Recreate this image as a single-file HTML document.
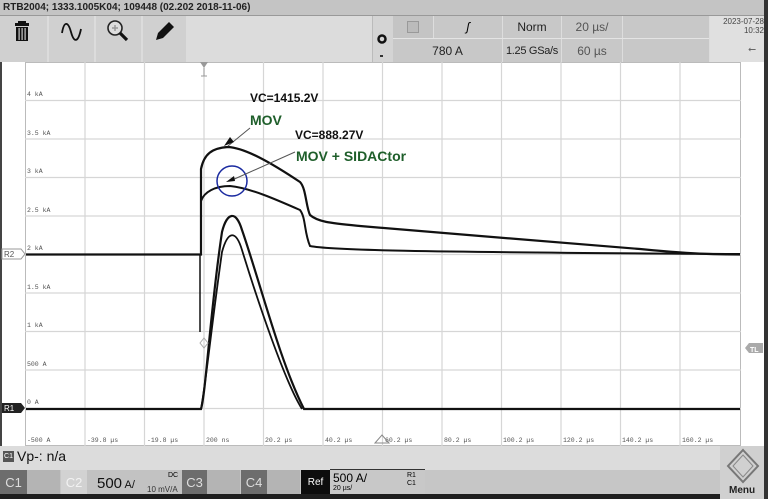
<!DOCTYPE html>
<html><head><style>
body{margin:0;width:768px;height:499px;overflow:hidden;background:#fff;font-family:"Liberation Sans",sans-serif;position:relative}
.a{position:absolute}
.tb{background:#d0d0d0}
.c{display:flex;align-items:center;justify-content:center;white-space:nowrap}
</style></head><body>
<div class="a" style="left:0;top:0;width:768px;height:15px;background:#c4c4c4;border-bottom:1px solid #999"></div>
<div class="a" style="left:3px;top:2px;font-size:10px;font-weight:bold;color:#222">RTB2004; 1333.1005K04; 109448 (02.202 2018-11-06)</div>
<div class="a" style="left:0;top:16px;width:768px;height:46px;background:#dcdcdc"></div>
<div class="a tb" style="left:0;top:16px;width:47px;height:46px"></div>
<div class="a tb" style="left:49px;top:16px;width:45px;height:46px"></div>
<div class="a tb" style="left:96px;top:16px;width:45px;height:46px"></div>
<div class="a tb" style="left:143px;top:16px;width:43px;height:46px"></div>
<svg class="a" style="left:13px;top:20px" width="22" height="24"><rect x="5" y="1" width="8" height="2" fill="#111"/><rect x="2" y="3" width="14" height="3" fill="#111"/><rect x="3" y="7" width="12" height="14" fill="#111"/><rect x="5.5" y="8" width="1.2" height="12" fill="#ccc"/><rect x="8.5" y="8" width="1.2" height="12" fill="#ccc"/><rect x="11.5" y="8" width="1.2" height="12" fill="#ccc"/></svg>
<svg class="a" style="left:60px;top:21px" width="24" height="24"><path d="M2 12 C4 0,8 0,11 11 C14 22,18 22,21 8" stroke="#111" stroke-width="1.8" fill="none"/></svg>
<svg class="a" style="left:106px;top:19px" width="24" height="24"><circle cx="9" cy="9" r="7" stroke="#222" stroke-width="1.6" fill="#ddd"/><path d="M6 9h6M9 6v6" stroke="#999" stroke-width="1.5"/><path d="M14 14l7 7" stroke="#111" stroke-width="3.2"/></svg>
<svg class="a" style="left:154px;top:20px" width="22" height="22"><path d="M2 20 L4 13 L15 2 L20 7 L9 18 Z" fill="#111"/></svg>
<div class="a" style="left:372px;top:16px;width:20px;height:46px;background:#d4d4d4;border-left:1px solid #bbb"></div>
<svg class="a" style="left:376px;top:33px" width="12" height="12"><circle cx="6" cy="6" r="3.5" stroke="#111" stroke-width="2.5" fill="none"/></svg>
<div class="a" style="left:380px;top:55px;width:3px;height:2px;background:#333"></div>
<div class="a" style="left:393px;top:16px;width:316px;height:46px;background:#c8c8c8"></div>
<div class="a" style="left:393px;top:16px;width:40px;height:22px;background:#c4c4c4;border-right:1px solid #ddd"></div>
<div class="a" style="left:407px;top:21px;width:10px;height:10px;border:1px solid #999;background:#bbb"></div>
<div class="a c" style="left:434px;top:16px;width:68px;height:22px;font-size:12px;font-style:italic;border-right:1px solid #ddd">ʃ</div>
<div class="a c" style="left:503px;top:16px;width:58px;height:22px;font-size:12px;color:#222;border-right:1px solid #ddd">Norm</div>
<div class="a c" style="left:562px;top:16px;width:60px;height:22px;font-size:12px;color:#555;border-right:1px solid #ddd">20 µs/</div>
<div class="a" style="left:393px;top:38px;width:316px;height:1px;background:#e4e4e4"></div>
<div class="a c" style="left:393px;top:39px;width:109px;height:23px;font-size:12px;color:#222;border-right:1px solid #ddd">780 A</div>
<div class="a c" style="left:503px;top:39px;width:58px;height:23px;font-size:11px;letter-spacing:-0.3px;color:#222;border-right:1px solid #ddd">1.25 GSa/s</div>
<div class="a c" style="left:562px;top:39px;width:60px;height:23px;font-size:12px;color:#555;border-right:1px solid #ddd">60 µs</div>
<div class="a" style="left:710px;top:16px;width:58px;height:46px;background:#e0e0e0"></div>
<div class="a" style="left:722px;top:17px;font-size:8px;color:#444;text-align:right;width:42px;line-height:9px">2023-07-28<br>10:32</div>
<div class="a" style="left:748px;top:44px;font-size:10px;color:#666">⭠</div>
<div class="a" style="left:764px;top:0;width:4px;height:499px;background:#333"></div>
<div class="a" style="left:0;top:62px;width:2px;height:384px;background:#444"></div>
<svg class="a" style="left:0;top:62px" width="764" height="384">
<rect x="25.5" y="0.5" width="715" height="383" fill="#fff" stroke="#bbb"/>
<g stroke="#d6d6d6" stroke-width="1.2">
<path d="M85 0v384M144.5 0v384M204 0v384M263.5 0v384M323 0v384M382.5 0v384M442 0v384M501.5 0v384M561 0v384M620.5 0v384M680 0v384"/>
<path d="M25 38.5h716M25 77h716M25 115.5h716M25 154h716M25 192.5h716M25 231h716M25 269.5h716M25 308h716M25 346.5h716"/>
</g>
<g font-size="6.5" fill="#555" font-family="Liberation Mono,monospace">
<text x="27" y="34">4 kA</text><text x="27" y="73">3.5 kA</text><text x="27" y="111">3 kA</text><text x="27" y="150">2.5 kA</text><text x="27" y="188">2 kA</text><text x="27" y="227">1.5 kA</text><text x="27" y="265">1 kA</text><text x="27" y="304">500 A</text><text x="27" y="342">0 A</text>
<text x="27" y="380">-500 A</text><text x="87" y="380">-39.8 µs</text><text x="147" y="380">-19.8 µs</text><text x="206" y="380">200 ns</text><text x="265" y="380">20.2 µs</text><text x="325" y="380">40.2 µs</text><text x="385" y="380">60.2 µs</text><text x="444" y="380">80.2 µs</text><text x="503" y="380">100.2 µs</text><text x="563" y="380">120.2 µs</text><text x="622" y="380">140.2 µs</text><text x="682" y="380">160.2 µs</text>
</g>
<path d="M375 381l7-8 7 8z" fill="none" stroke="#888"/>
<path d="M200 0h8l-4 6z" fill="#999"/><path d="M204 6v8M201 14h6" stroke="#999"/>
<g fill="none" stroke="#111">
<path stroke-width="2.2" d="M26 192.5H201V107C204 92,212 86,228 85C245 86,270 100,300 120C306 126,306 145,310 153C318 160,330 161,360 164C450 172,560 180,640 187C670 190,700 192.5,740 192.5"/>
<path stroke-width="2" d="M201 139C204 130,215 124,230 124C250 126,275 137,300 148C306 156,304 170,310 184C330 188,400 190,740 192"/>
<path stroke-width="1.5" d="M200 192V270"/>
<path stroke-width="2.2" d="M26 347H201C206 330,210 250,222 170C227 150,236 148,242 168C260 220,280 300,304 347H740"/>
<path stroke-width="1.8" d="M201 347C206 320,212 260,222 190C228 168,236 168,242 188C258 240,285 320,302 347"/>
</g>
<path d="M200 281l4-5 4 5-4 5z" fill="none" stroke="#aaa"/>
<circle cx="232" cy="119" r="15" fill="none" stroke="#1a2aa0" stroke-width="1.5"/>
<path d="M230 119L295 90M228 84L250 66" stroke="#555" stroke-width="1"/>
<path d="M226 120l8-6 1 5zM224 84l6-9 4 5z" fill="#111"/>
<g font-weight="bold" font-family="Liberation Sans,sans-serif">
<text x="250" y="40" font-size="12" fill="#111">VC=1415.2V</text>
<text x="250" y="63" font-size="14" fill="#1e5e2a">MOV</text>
<text x="295" y="77" font-size="12" fill="#111">VC=888.27V</text>
<text x="296" y="99" font-size="14" fill="#1e5e2a">MOV + SIDACtor</text>
</g>
<path d="M2 187h19l4 5-4 5H2z" fill="#fff" stroke="#999"/><text x="4" y="195" font-size="8" fill="#555">R2</text>
<path d="M2 341h19l4 5-4 5H2z" fill="#222"/><text x="4" y="349" font-size="8" fill="#fff">R1</text>
<path d="M745 286l4-5h14v10h-14z" fill="#aaa"/><text x="750" y="290" font-size="7" fill="#fff" font-weight="bold">TL</text>
</svg>
<div class="a" style="left:0;top:446px;width:764px;height:24px;background:#dcdcdc"></div>
<div class="a c" style="left:3px;top:451px;width:11px;height:11px;background:#555;color:#fff;font-size:7px">C1</div>
<div class="a" style="left:17px;top:448px;font-size:14px;color:#111">Vp-: n/a</div>
<div class="a" style="left:0;top:470px;width:764px;height:24px;background:#c6c6c6"></div>
<div class="a c" style="left:0;top:470px;width:27px;height:24px;background:#6d6d6d;color:#ddd;font-size:13px">C1</div>
<div class="a" style="left:27px;top:470px;width:33px;height:24px;background:#b4b4b4"></div>
<div class="a c" style="left:61px;top:470px;width:26px;height:24px;background:#d2d2d2;color:#f2f2f2;font-size:13px">C2</div>
<div class="a" style="left:87px;top:470px;width:95px;height:24px;background:#c2c2c2"></div>
<div class="a" style="left:97px;top:475px;font-size:15px;color:#111">500<span style="font-size:11px"> A/</span></div>
<div class="a" style="left:168px;top:472px;font-size:7px">DC</div>
<div class="a" style="left:147px;top:485px;font-size:8px;color:#333">10 mV/A</div>
<div class="a c" style="left:182px;top:470px;width:25px;height:24px;background:#6d6d6d;color:#ddd;font-size:13px">C3</div>
<div class="a" style="left:207px;top:470px;width:33px;height:24px;background:#b4b4b4"></div>
<div class="a c" style="left:241px;top:470px;width:26px;height:24px;background:#6d6d6d;color:#ddd;font-size:13px">C4</div>
<div class="a" style="left:267px;top:470px;width:33px;height:24px;background:#b4b4b4"></div>
<div class="a c" style="left:301px;top:470px;width:29px;height:24px;background:#0d0d0d;color:#fff;font-size:10px">Ref</div>
<div class="a" style="left:330px;top:469px;width:95px;height:25px;background:#c8c8c8;border-top:1px solid #333"></div>
<div class="a" style="left:333px;top:471px;font-size:12px">500 A/</div>
<div class="a" style="left:333px;top:485px;font-size:7px">20 µs/</div>
<div class="a" style="left:407px;top:472px;font-size:7px;line-height:8px;text-align:center">R1<br>C1</div>
<div class="a" style="left:720px;top:446px;width:44px;height:53px;background:#d0d0d0"></div>
<svg class="a" style="left:726px;top:448px" width="34" height="40"><path d="M17 2L32 18L17 34L2 18Z" fill="none" stroke="#777" stroke-width="2"/><path d="M17 7L27 18L17 29L7 18Z" fill="none" stroke="#888"/></svg>
<div class="a" style="left:729px;top:485px;font-size:10px;font-weight:bold;color:#222">Menu</div>
<div class="a" style="left:0;top:494px;width:720px;height:5px;background:#1e1e1e"></div>
</body></html>
